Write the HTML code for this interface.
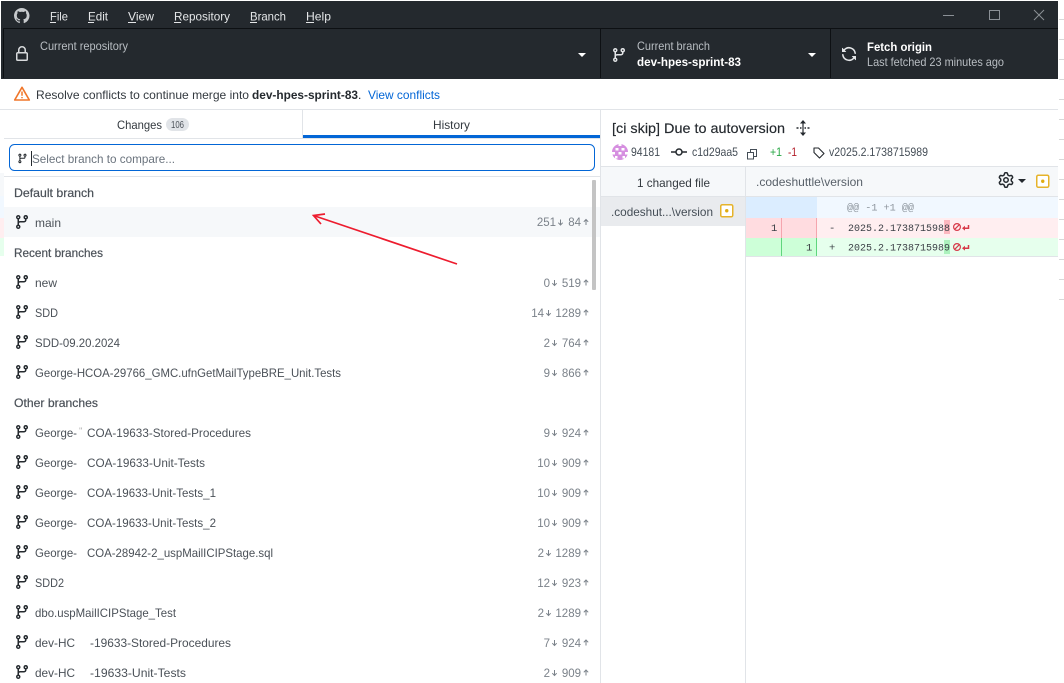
<!DOCTYPE html>
<html><head><meta charset="utf-8"><title>GitHub Desktop</title>
<style>
html,body{margin:0;padding:0;background:#fff;width:1064px;height:683px;overflow:hidden}
svg{display:block;font-family:"Liberation Sans",sans-serif;font-size:12px}
.mn{fill:#e4e6e8}.sm{fill:#b9bec3}.w{fill:#fff;font-weight:bold}
.t{fill:#4b5158}.h{fill:#4b5158;stroke:#4b5158;stroke-width:.2}
.c{fill:#7b828a;font-size:11.5px}.m{font-family:"Liberation Mono",monospace;font-size:10.5px;fill:#3a3f45}
</style></head><body>
<svg width="1064" height="683" viewBox="0 0 1064 683" xmlns="http://www.w3.org/2000/svg">
<defs>
<path id="br" d="M9.5 3.25a2.25 2.25 0 1 1 3 2.122V6A2.5 2.5 0 0 1 10 8.5H6a1 1 0 0 0-1 1v1.128a2.251 2.251 0 1 1-1.5 0V5.372a2.25 2.25 0 1 1 1.5 0v1.836A2.493 2.493 0 0 1 6 7h4a1 1 0 0 0 1-1v-.628A2.25 2.25 0 0 1 9.5 3.25Zm-6 0a.75.75 0 1 0 1.5 0 .75.75 0 0 0-1.5 0Zm8.25-.75a.75.75 0 1 0 0 1.5.75.75 0 0 0 0-1.5ZM4.25 12a.75.75 0 1 0 0 1.5.75.75 0 0 0 0-1.5Z"/>
<g id="r"><use href="#br" x="0" y="0" fill="#24292e"/></g>
<path id="dn" d="M0 0v5.5M-2.2 3.2 0 5.5 2.2 3.2" fill="none" stroke="#7b828a" stroke-width="1"/>
<path id="up" d="M0 5.5V0M-2.2 2.3 0 0 2.2 2.3" fill="none" stroke="#7b828a" stroke-width="1"/>
<g id="box"><rect x=".75" y=".75" width="12" height="12" rx="1.5" fill="#fff" stroke="#e6b32a" stroke-width="1.5"/><circle cx="6.75" cy="6.75" r="1.7" fill="#e0ab10"/></g>
<g id="no" fill="none" stroke="#d73a49" stroke-width="1.2"><circle cx="4" cy="4" r="3.4"/><path d="M1.6 6.4 6.4 1.6"/></g>
<path id="ret" d="M6.5 0v3.2H2.500" fill="none" stroke="#d73a49" stroke-width="1.5"/>
<path id="reth" d="M3 .8 0 3.200 3 5.600z" fill="#d73a49"/>
</defs>

<!-- title + toolbar -->
<rect x="1" y="1" width="1057" height="78" fill="#24292e"/>
<rect x="3" y="28" width="1055" height="1" fill="#0d1013"/>
<rect x="3" y="28" width="1" height="50" fill="#0d1013"/>
<rect x="600" y="29" width="1" height="49" fill="#0d1013"/>
<rect x="830" y="29" width="1" height="49" fill="#0d1013"/>

<path transform="translate(14,8) scale(.97)" fill="#c6c9cc" d="M8 0c4.42 0 8 3.58 8 8a8.013 8.013 0 0 1-5.45 7.59c-.4.08-.55-.17-.55-.38 0-.27.01-1.13.01-2.2 0-.75-.25-1.23-.54-1.48 1.78-.2 3.65-.88 3.65-3.95 0-.88-.31-1.59-.82-2.15.08-.2.36-1.02-.08-2.12 0 0-.67-.22-2.2.82-.64-.18-1.32-.27-2-.27-.68 0-1.36.09-2 .27-1.53-1.03-2.2-.82-2.2-.82-.44 1.1-.16 1.92-.08 2.12-.51.56-.82 1.28-.82 2.15 0 3.06 1.86 3.75 3.64 3.95-.23.2-.44.55-.51 1.07-.46.21-1.61.55-2.33-.66-.15-.24-.6-.83-1.23-.82-.67.01-.27.38.01.53.34.19.73.9.82 1.13.16.45.68 1.31 2.69.94 0 .67.01 1.3.01 1.49 0 .21-.15.45-.55.38A7.995 7.995 0 0 1 0 8c0-4.42 3.58-8 8-8Z"/>
<g class="mn">
<text x="50" y="20.5" textLength="18" lengthAdjust="spacingAndGlyphs">File</text>
<text x="88" y="20.5" textLength="20" lengthAdjust="spacingAndGlyphs">Edit</text>
<text x="128" y="20.5" textLength="26" lengthAdjust="spacingAndGlyphs">View</text>
<text x="174" y="20.5" textLength="56" lengthAdjust="spacingAndGlyphs">Repository</text>
<text x="250" y="20.5" textLength="36" lengthAdjust="spacingAndGlyphs">Branch</text>
<text x="306" y="20.5" textLength="25" lengthAdjust="spacingAndGlyphs">Help</text>
<rect x="50" y="22" width="6" height="1"/><rect x="88" y="22" width="6" height="1"/><rect x="128" y="22" width="8" height="1"/><rect x="174" y="22" width="7" height="1"/><rect x="250" y="22" width="7" height="1"/><rect x="306" y="22" width="8" height="1"/>
</g>
<g stroke="#8b9096" fill="none" stroke-width="1">
<path d="M943 15.5h11"/><rect x="989.5" y="10.5" width="10" height="9"/><path d="M1034 10l10 10M1044 10l-10 10"/>
</g>

<path transform="translate(14,46)" fill="#d8dadc" d="M4 4a4 4 0 0 1 8 0v2h.25c.966 0 1.75.784 1.75 1.75v5.5A1.75 1.75 0 0 1 12.25 15h-8.5A1.75 1.75 0 0 1 2 13.25v-5.5C2 6.784 2.784 6 3.75 6H4Zm8.25 3.5h-8.5a.25.25 0 0 0-.25.25v5.5c0 .138.112.25.25.25h8.5a.25.25 0 0 0 .25-.25v-5.5a.25.25 0 0 0-.25-.25ZM10.5 6V4a2.5 2.5 0 1 0-5 0v2Z"/>
<text class="sm" x="40" y="50" textLength="88" lengthAdjust="spacingAndGlyphs">Current repository</text>
<path d="M578 53h8l-4 4z" fill="#fff"/>
<use href="#br" transform="translate(611,47)" fill="#e4e6e8"/>
<text class="sm" x="637" y="50" textLength="73" lengthAdjust="spacingAndGlyphs">Current branch</text>
<text class="w" x="637" y="66" textLength="104" lengthAdjust="spacingAndGlyphs">dev-hpes-sprint-83</text>
<path d="M808 53h8l-4 4z" fill="#fff"/>
<path transform="translate(841,46)" fill="#e4e6e8" d="M1.705 8.005a.75.75 0 0 1 .834.656 5.5 5.5 0 0 0 9.592 2.97l-1.204-1.204a.25.25 0 0 1 .177-.427h3.646a.25.25 0 0 1 .25.25v3.646a.25.25 0 0 1-.427.177l-1.38-1.38A7.002 7.002 0 0 1 1.05 8.84a.75.75 0 0 1 .656-.834ZM8 2.5a5.487 5.487 0 0 0-4.131 1.869l1.204 1.204A.25.25 0 0 1 4.896 6H1.25A.25.25 0 0 1 1 5.75V2.104a.25.25 0 0 1 .427-.177l1.38 1.38A7.002 7.002 0 0 1 14.95 7.16a.75.75 0 0 1-1.49.178A5.5 5.5 0 0 0 8 2.5Z"/>
<text class="w" x="867" y="51" textLength="65" lengthAdjust="spacingAndGlyphs">Fetch origin</text>
<text class="sm" x="867" y="66" textLength="137" lengthAdjust="spacingAndGlyphs">Last fetched 23 minutes ago</text>

<!-- right edge dashes -->
<path d="M1059 19.5h5M1059 39.5h5M1059 59.5h5M1059 79.5h5M1059 99.5h5M1059 119.5h5M1059 139.5h5M1059 159.5h5M1059 179.5h5M1059 199.5h5M1059 219.5h5M1059 239.5h5M1059 259.5h5M1059 279.5h5M1059 299.5h5" stroke="#d8d8d8"/>

<!-- banner -->
<path d="M22 87.3 29.3 100H14.7Z" fill="none" stroke="#f0762a" stroke-width="1.6" stroke-linejoin="round"/>
<path d="M22 91.5v4.2M22 97v1.2" stroke="#f0762a" stroke-width="1.5"/>
<text x="36" y="99" fill="#33393f" textLength="213" lengthAdjust="spacingAndGlyphs">Resolve conflicts to continue merge into</text>
<text x="252" y="99" fill="#24292e" font-weight="bold" textLength="106" lengthAdjust="spacingAndGlyphs">dev-hpes-sprint-83</text>
<text x="358" y="99" fill="#24292e">.</text>
<text x="368" y="99" fill="#0366d6" textLength="72" lengthAdjust="spacingAndGlyphs">View conflicts</text>
<rect x="0" y="109" width="1058" height="1" fill="#e1e4e8"/>

<!-- left strip remnants -->
<rect x="0" y="173" width="4" height="23" fill="#f6f8fa"/><rect x="0" y="196" width="4" height="22" fill="#f1f8ff"/><rect x="0" y="218" width="4" height="20" fill="#ffeef0"/><rect x="0" y="238" width="4" height="18" fill="#e6ffed"/>

<!-- tabs -->
<text x="117" y="129" fill="#33393f" textLength="45" lengthAdjust="spacingAndGlyphs">Changes</text>
<rect x="166" y="118" width="23" height="13" rx="6.5" fill="#e1e4e8"/>
<text x="171" y="128" fill="#4b5158" font-size="10" textLength="13" lengthAdjust="spacingAndGlyphs">106</text>
<rect x="302" y="110" width="1" height="28" fill="#e1e4e8"/>
<text x="433" y="129" fill="#33393f" textLength="37" lengthAdjust="spacingAndGlyphs">History</text>
<rect x="303" y="135" width="297" height="3" fill="#0366d6"/>
<rect x="4" y="138" width="596" height="1" fill="#e1e4e8"/>
<rect x="600" y="110" width="1" height="573" fill="#e1e4e8"/>

<!-- filter -->
<rect x="9.5" y="144.5" width="585" height="26" rx="5" fill="#fff" stroke="#0366d6"/>
<use href="#br" transform="translate(17,153) scale(.68)" fill="#24292e"/>
<rect x="31" y="151" width="1" height="15" fill="#24292e"/>
<text x="32" y="163" fill="#6a737d" textLength="143" lengthAdjust="spacingAndGlyphs">Select branch to compare...</text>
<rect x="4" y="176" width="596" height="1" fill="#e1e4e8"/>

<!-- list -->
<text class="h" x="14" y="197" textLength="80" lengthAdjust="spacingAndGlyphs">Default branch</text>
<rect x="4" y="207" width="596" height="30" fill="#f6f8fa"/>
<text class="h" x="14" y="257" textLength="89" lengthAdjust="spacingAndGlyphs">Recent branches</text>
<text class="h" x="14" y="407" textLength="84" lengthAdjust="spacingAndGlyphs">Other branches</text>

<use href="#r" x="14" y="214"/><use href="#r" x="14" y="274"/><use href="#r" x="14" y="304"/><use href="#r" x="14" y="334"/><use href="#r" x="14" y="364"/>
<use href="#r" x="14" y="424"/><use href="#r" x="14" y="454"/><use href="#r" x="14" y="484"/><use href="#r" x="14" y="514"/><use href="#r" x="14" y="544"/><use href="#r" x="14" y="574"/><use href="#r" x="14" y="604"/><use href="#r" x="14" y="634"/><use href="#r" x="14" y="664"/>

<g class="t">
<text x="35" y="227" textLength="26" lengthAdjust="spacingAndGlyphs">main</text>
<text x="35" y="287" textLength="22" lengthAdjust="spacingAndGlyphs">new</text>
<text x="35" y="317" textLength="23" lengthAdjust="spacingAndGlyphs">SDD</text>
<text x="35" y="347" textLength="85" lengthAdjust="spacingAndGlyphs">SDD-09.20.2024</text>
<text x="35" y="377" textLength="306" lengthAdjust="spacingAndGlyphs">George-HCOA-29766_GMC.ufnGetMailTypeBRE_Unit.Tests</text>
<text x="35" y="437" textLength="42" lengthAdjust="spacingAndGlyphs">George-</text><text x="79" y="434" font-size="9" fill="#aaa">''</text><text x="87" y="437" textLength="164" lengthAdjust="spacingAndGlyphs">COA-19633-Stored-Procedures</text>
<text x="35" y="467" textLength="42" lengthAdjust="spacingAndGlyphs">George-</text><text x="87" y="467" textLength="118" lengthAdjust="spacingAndGlyphs">COA-19633-Unit-Tests</text>
<text x="35" y="497" textLength="42" lengthAdjust="spacingAndGlyphs">George-</text><text x="87" y="497" textLength="129" lengthAdjust="spacingAndGlyphs">COA-19633-Unit-Tests_1</text>
<text x="35" y="527" textLength="42" lengthAdjust="spacingAndGlyphs">George-</text><text x="87" y="527" textLength="129" lengthAdjust="spacingAndGlyphs">COA-19633-Unit-Tests_2</text>
<text x="35" y="557" textLength="42" lengthAdjust="spacingAndGlyphs">George-</text><text x="87" y="557" textLength="186" lengthAdjust="spacingAndGlyphs">COA-28942-2_uspMailICIPStage.sql</text>
<text x="35" y="587" textLength="29" lengthAdjust="spacingAndGlyphs">SDD2</text>
<text x="35" y="617" textLength="141" lengthAdjust="spacingAndGlyphs">dbo.uspMailICIPStage_Test</text>
<text x="35" y="647" textLength="40" lengthAdjust="spacingAndGlyphs">dev-HC</text><text x="90" y="647" textLength="141" lengthAdjust="spacingAndGlyphs">-19633-Stored-Procedures</text>
<text x="35" y="677" textLength="40" lengthAdjust="spacingAndGlyphs">dev-HC</text><text x="90" y="677" textLength="96" lengthAdjust="spacingAndGlyphs">-19633-Unit-Tests</text>
</g>

<!-- counts -->
<g class="c" text-anchor="end">
<text x="556" y="226">251</text><text x="581" y="226">84</text>
<text x="550" y="287">0</text><text x="581" y="287">519</text>
<text x="544" y="317">14</text><text x="581" y="317">1289</text>
<text x="550" y="347">2</text><text x="581" y="347">764</text>
<text x="550" y="377">9</text><text x="581" y="377">866</text>
<text x="550" y="437">9</text><text x="581" y="437">924</text>
<text x="550" y="467">10</text><text x="581" y="467">909</text>
<text x="550" y="497">10</text><text x="581" y="497">909</text>
<text x="550" y="527">10</text><text x="581" y="527">909</text>
<text x="544" y="557">2</text><text x="581" y="557">1289</text>
<text x="550" y="587">12</text><text x="581" y="587">923</text>
<text x="544" y="617">2</text><text x="581" y="617">1289</text>
<text x="550" y="647">7</text><text x="581" y="647">924</text>
<text x="550" y="677">2</text><text x="581" y="677">909</text>
</g>
<use href="#dn" x="560.5" y="219.5"/><use href="#up" x="586" y="219.5"/>
<use href="#dn" x="554.5" y="280"/><use href="#up" x="586" y="280"/>
<use href="#dn" x="548.5" y="310"/><use href="#up" x="586" y="310"/>
<use href="#dn" x="554.5" y="340"/><use href="#up" x="586" y="340"/>
<use href="#dn" x="554.5" y="370"/><use href="#up" x="586" y="370"/>
<use href="#dn" x="554.5" y="430"/><use href="#up" x="586" y="430"/>
<use href="#dn" x="554.5" y="460"/><use href="#up" x="586" y="460"/>
<use href="#dn" x="554.5" y="490"/><use href="#up" x="586" y="490"/>
<use href="#dn" x="554.5" y="520"/><use href="#up" x="586" y="520"/>
<use href="#dn" x="548.5" y="550"/><use href="#up" x="586" y="550"/>
<use href="#dn" x="554.5" y="580"/><use href="#up" x="586" y="580"/>
<use href="#dn" x="548.5" y="610"/><use href="#up" x="586" y="610"/>
<use href="#dn" x="554.5" y="640"/><use href="#up" x="586" y="640"/>
<use href="#dn" x="554.5" y="670"/><use href="#up" x="586" y="670"/>

<rect x="592" y="180" width="4" height="110" rx="1" fill="#c4c4c4"/>
<path d="M457 264 313.5 215.5M325 214 313.5 215.5 321 224" fill="none" stroke="#ed1c2e" stroke-width="1.7"/>

<!-- commit header -->
<text x="612" y="133" fill="#24292e" stroke="#24292e" stroke-width=".15" font-size="14" textLength="173" lengthAdjust="spacingAndGlyphs">[ci skip] Due to autoversion</text>
<g stroke="#24292e" fill="none"><path d="M803 122v12" stroke-width="1.2"/><path d="M796.500 128h2M800 128h1.500M804.500 128h1.500M807.500 128h2" stroke-width="1.4"/></g>
<path d="M803 120l-3 3.500h6zM803 136l-3-3.500h6z" fill="#24292e"/>
<circle cx="620" cy="152" r="8" fill="#d68fe0"/>
<g fill="#fff"><rect x="615.500" y="148" width="3" height="2.500"/><rect x="621.500" y="148" width="3" height="2.500"/><rect x="612" y="152" width="3" height="2.500"/><rect x="625" y="152" width="3" height="2.500"/><rect x="618.500" y="152" width="3" height="2.500"/><rect x="615" y="156" width="2.500" height="2.500"/><rect x="622.500" y="156" width="2.500" height="2.500"/><rect x="618.500" y="144" width="3" height="2"/></g>
<text x="631" y="156" fill="#444d56" textLength="29" lengthAdjust="spacingAndGlyphs">94181</text>
<path d="M671 152h16" stroke="#24292e" stroke-width="1.5"/><circle cx="679" cy="152" r="3" fill="#fff" stroke="#24292e" stroke-width="1.5"/>
<text x="692" y="156" fill="#444d56" textLength="46" lengthAdjust="spacingAndGlyphs">c1d29aa5</text>
<g fill="#fff" stroke="#444d56"><rect x="750.5" y="149.5" width="6" height="7"/><rect x="747.5" y="152.5" width="6" height="6.5"/></g>
<text x="770" y="156" fill="#28a745" textLength="12" lengthAdjust="spacingAndGlyphs">+1</text>
<text x="788" y="156" fill="#b31d28" textLength="9" lengthAdjust="spacingAndGlyphs">-1</text>
<path d="M814 148h4.500l5.500 5.500-4.500 4.500-5.500-5.500zM816.500 150.500v.01" fill="none" stroke="#24292e" stroke-width="1.1" stroke-linejoin="round"/>
<text x="829" y="156" fill="#444d56" textLength="99" lengthAdjust="spacingAndGlyphs">v2025.2.1738715989</text>

<!-- file list -->
<rect x="601" y="166" width="457" height="1" fill="#e1e4e8"/>
<rect x="601" y="167" width="457" height="29" fill="#f6f8fa"/>
<rect x="601" y="196" width="457" height="1" fill="#e1e4e8"/>
<text x="637" y="187" fill="#33393f" textLength="73" lengthAdjust="spacingAndGlyphs">1 changed file</text>
<rect x="601" y="197" width="144" height="29" fill="#e9ebee"/>
<text x="611" y="216" fill="#444d56" textLength="102" lengthAdjust="spacingAndGlyphs">.codeshut...\version</text>
<use href="#box" x="720" y="204"/>
<rect x="745" y="167" width="1" height="516" fill="#e1e4e8"/>

<!-- diff -->
<text x="756" y="186" fill="#586069" textLength="107" lengthAdjust="spacingAndGlyphs">.codeshuttle\version</text>
<path transform="translate(998,172)" fill="#24292e" d="M8 0a8.2 8.2 0 0 1 .701.031C9.444.095 9.99.645 10.16 1.29l.288 1.107c.018.066.079.158.212.224.231.114.454.243.668.386.123.082.233.09.299.071l1.103-.303c.644-.176 1.392.021 1.82.63.27.385.506.792.704 1.218.315.675.111 1.422-.364 1.891l-.814.806c-.049.048-.098.147-.088.294.016.257.016.515 0 .772-.01.147.038.246.088.294l.814.806c.475.469.679 1.216.364 1.891a7.977 7.977 0 0 1-.704 1.217c-.428.61-1.176.807-1.82.63l-1.102-.302c-.067-.019-.177-.011-.3.071a5.909 5.909 0 0 1-.668.386c-.133.066-.194.158-.211.224l-.29 1.106c-.168.646-.715 1.196-1.458 1.26a8.006 8.006 0 0 1-1.402 0c-.743-.064-1.289-.614-1.458-1.26l-.289-1.106c-.018-.066-.079-.158-.212-.224a5.738 5.738 0 0 1-.668-.386c-.123-.082-.233-.09-.299-.071l-1.103.303c-.644.176-1.392-.021-1.82-.63a8.12 8.12 0 0 1-.704-1.218c-.315-.675-.111-1.422.363-1.891l.815-.806c.05-.048.098-.147.088-.294a6.214 6.214 0 0 1 0-.772c.01-.147-.038-.246-.088-.294l-.815-.806C.635 6.045.431 5.298.746 4.623a7.92 7.92 0 0 1 .704-1.217c.428-.61 1.176-.807 1.82-.63l1.102.302c.067.019.177.011.3-.071.214-.143.437-.272.668-.386.133-.066.194-.158.211-.224l.29-1.106C6.009.645 6.556.095 7.299.03 7.53.01 7.764 0 8 0Zm-.571 1.525c-.036.003-.108.036-.137.146l-.289 1.105c-.147.561-.549.967-.998 1.189-.173.086-.34.183-.5.29-.417.278-.97.423-1.529.27l-1.103-.303c-.109-.03-.175.016-.195.045-.22.312-.412.644-.573.99-.014.031-.021.11.059.19l.815.806c.411.406.562.957.53 1.456a4.709 4.709 0 0 0 0 .582c.032.499-.119 1.05-.53 1.456l-.815.806c-.081.08-.073.159-.059.19.162.346.353.677.573.989.02.03.085.076.195.046l1.102-.303c.56-.153 1.113-.008 1.53.27.161.107.328.204.501.29.447.222.85.629.997 1.189l.289 1.105c.029.109.101.143.137.146a6.6 6.6 0 0 0 1.142 0c.036-.003.108-.036.137-.146l.289-1.105c.147-.561.549-.967.998-1.189.173-.086.34-.183.5-.29.417-.278.97-.423 1.529-.27l1.103.303c.109.029.175-.016.195-.045.22-.313.411-.644.573-.99.014-.031.021-.11-.059-.19l-.815-.806c-.411-.406-.562-.957-.53-1.456a4.709 4.709 0 0 0 0-.582c-.032-.499.119-1.05.53-1.456l.815-.806c.081-.08.073-.159.059-.19a6.464 6.464 0 0 0-.573-.989c-.02-.03-.085-.076-.195-.046l-1.102.303c-.56.153-1.113.008-1.53-.27a4.44 4.44 0 0 0-.501-.29c-.447-.222-.85-.629-.997-1.189l-.289-1.105c-.029-.11-.101-.143-.137-.146a6.6 6.6 0 0 0-1.142 0ZM11 8a3 3 0 1 1-6 0 3 3 0 0 1 6 0ZM9.5 8a1.5 1.5 0 1 0-3.001.001A1.5 1.5 0 0 0 9.5 8Z"/>
<path d="M1018 179h8l-4 4z" fill="#24292e"/>
<use href="#box" x="1036" y="174.500"/>

<rect x="746" y="197" width="71" height="21" fill="#dbedff"/><rect x="817" y="197" width="241" height="21" fill="#f1f8ff"/>
<rect x="746" y="218" width="71" height="20" fill="#ffdce0"/><rect x="817" y="218" width="241" height="20" fill="#ffeef0"/>
<rect x="746" y="238" width="71" height="18" fill="#cdffd8"/><rect x="817" y="238" width="241" height="18" fill="#e6ffed"/>
<rect x="746" y="256" width="312" height="1" fill="#e1e4e8"/>
<rect x="781" y="218" width="1" height="20" fill="#f5a5ae"/><rect x="816" y="218" width="1" height="20" fill="#f5a5ae"/>
<rect x="781" y="238" width="1" height="18" fill="#5fd67d"/><rect x="816" y="238" width="1" height="18" fill="#5fd67d"/>
<rect x="944" y="220" width="6" height="14" fill="#fdb8c0"/><rect x="944" y="240" width="6" height="14" fill="#acf2bd"/>
<text class="m" x="847" y="210.500" style="fill:#8d959d" textLength="67" lengthAdjust="spacingAndGlyphs">@@ -1 +1 @@</text>
<text class="m" x="771" y="231">1</text><text class="m" x="829" y="231">-</text><text class="m" x="848" y="231" textLength="102" lengthAdjust="spacingAndGlyphs">2025.2.1738715988</text>
<text class="m" x="806" y="250.500">1</text><text class="m" x="829" y="250.500">+</text><text class="m" x="848" y="250.500" textLength="102" lengthAdjust="spacingAndGlyphs">2025.2.1738715989</text>
<use href="#no" x="953" y="223"/><use href="#ret" x="962" y="225"/><use href="#reth" x="962" y="225"/>
<use href="#no" x="953" y="243"/><use href="#ret" x="962" y="245"/><use href="#reth" x="962" y="245"/>
</svg>
</body></html>
